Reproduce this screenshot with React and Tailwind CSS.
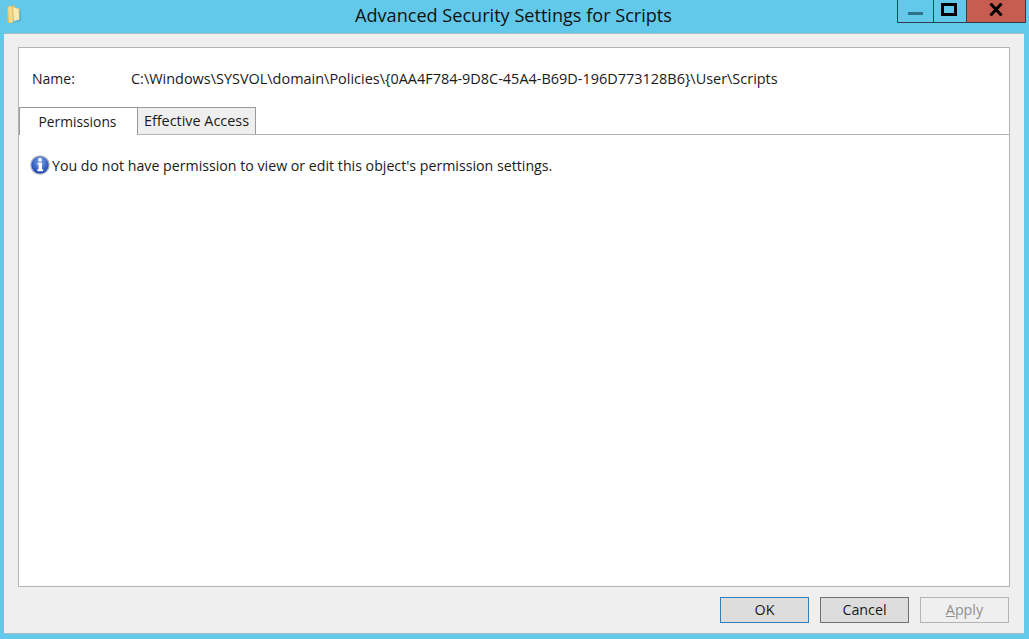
const font = { fontFamily: '"Open Sans", "Noto Sans", sans-serif' };

function FolderIcon() {
    return (
        <svg width="16" height="20" viewBox="0 0 16 20" className="mt-[4px] ml-[6px]">
            <path d="M1 3 L9 1 L9 4 L13.5 4 L13.5 16 L7 16 L7 19 L2 19 L1 17 Z" fill="#d9b95c" />
            <path d="M7 3 L12.5 5 L13 15.5 L8 17.5 Z" fill="#f8eab0" />
            <path d="M2 3 L6 2 L7 18 L3 19 Z" fill="#f3d98a" />
            <path d="M14 7 L15 7 L15 17 L8 18 L8 17 L14 16 Z" fill="#3f86a3" opacity="0.45" />
        </svg>
    );
}

function InfoIcon() {
    return (
        <svg width="20" height="20" viewBox="0 0 20 20" className="-mt-[1px]">
            <defs>
                <radialGradient id="infoFill" cx="50%" cy="35%" r="65%">
                    <stop offset="0%" stopColor="#7fa9ee" />
                    <stop offset="100%" stopColor="#173fae" />
                </radialGradient>
            </defs>
            <circle cx="10" cy="10" r="9.8" fill="#aeb4c4" />
            <circle cx="10" cy="10" r="8.6" fill="url(#infoFill)" />
            <circle cx="10" cy="4.8" r="2" fill="#ffffff" />
            <path d="M7.6 7.8 H12 V14.2 H13.2 V16.2 H7.4 V14.2 H8.6 V9.6 H7.6 Z" fill="#ffffff" />
        </svg>
    );
}

function CaptionButtons() {
    return (
        <div className="mr-[3px] flex h-[23px] justify-self-end rounded-b-[1px] border border-t-0 border-[#2b3f4a]">
            <div className="flex w-[36px] justify-center border-r border-[#2b3f4a] pt-[12px]">
                <span className="h-[3px] w-[15px] bg-[#2f7288]" />
            </div>
            <div className="flex w-[32px] items-start justify-center pr-[2px] pt-[3px]">
                <span className="h-[13px] w-[16px] border-[3px] border-black" />
            </div>
            <div className="flex w-[59px] items-start justify-center border-l border-[#4a3a3a] bg-[#c75c50]">
                <svg width="14" height="13" viewBox="0 0 14 13" className="mt-[3px]">
                    <path d="M1.5 0.5 L12.5 12.5 M12.5 0.5 L1.5 12.5" stroke="#000000" strokeWidth="3" fill="none" />
                </svg>
            </div>
        </div>
    );
}

function DialogButton({ label, className }) {
    return (
        <button className={`h-[26px] w-[89px] border pt-[1px] text-[14.3px] leading-none ${className}`}>
            {label}
        </button>
    );
}

export default function App() {
    return (
        <div className="flex h-[639px] w-[1029px] flex-col overflow-hidden bg-[#63c9ea] text-[#1a1a1a]" style={font}>
            <div className="grid h-[33px] shrink-0 grid-cols-[1fr_auto_1fr]">
                <FolderIcon />
                <h1 className="mr-[2px] mt-[3px] text-[18.1px] leading-[24px] text-[#111111]">
                    Advanced Security Settings for Scripts
                </h1>
                <CaptionButtons />
            </div>

            <div className="mb-[6px] ml-[4px] mr-[5px] flex flex-1 flex-col border-t border-[#a9bcc4] bg-[#efefef] pb-[10px] pl-[14px] pr-[14px] pt-[13px] shadow-[0_1px_0_#a9bcc4]">
                <div className="flex flex-1 flex-col border border-[#b4b4b4] bg-white">
                    <div className="flex h-[59px] items-end pb-[18px] pl-[13px] leading-[20px]">
                        <span className="w-[99px] text-[14px]">Name:</span>
                        <span className="text-[14.46px]">C:\Windows\SYSVOL\domain\Policies\{"{"}0AA4F784-9D8C-45A4-B69D-196D773128B6{"}"}\User\Scripts</span>
                    </div>

                    <div className="flex h-[28px] items-end border-b border-[#b4b4b4]">
                        <div className="relative top-[1px] flex h-[28px] w-[119px] items-center justify-center border border-b-0 border-[#9a9a9a] bg-white pr-[2px] pt-[1px] text-[13.8px]">
                            Permissions
                        </div>
                        <div className="flex h-[27px] w-[118px] items-center justify-center border border-b-0 border-l-0 border-[#9a9a9a] bg-[#efefef] pb-[1px] text-[14.4px]">
                            Effective Access
                        </div>
                    </div>

                    <div className="flex flex-1 items-start gap-[2px] pl-[11px] pt-[21px] leading-[20px]">
                        <InfoIcon />
                        <span className="text-[14.2px]">You do not have permission to view or edit this object's permission settings.</span>
                    </div>
                </div>

                <div className="flex justify-end gap-[11px] pr-[1px] pt-[10px]">
                    <DialogButton label="OK" className="border-[#2f7fbd] bg-[#dddddd]" />
                    <DialogButton label="Cancel" className="border-[#707070] bg-[#dddddd]" />
                    <DialogButton
                        label={<><span className="underline">A</span>pply</>}
                        className="border-[#b4b4b4] bg-[#efefef] text-[#8f8f8f]"
                    />
                </div>
            </div>
        </div>
    );
}
